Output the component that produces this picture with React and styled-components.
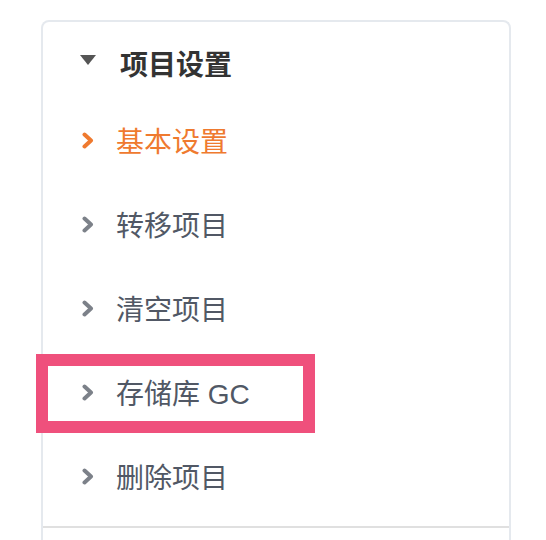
import React from "react";
import styled, { createGlobalStyle } from "styled-components";

const GlobalStyle = createGlobalStyle`
  html, body {
    margin: 0;
    padding: 0;
    background: #ffffff;
  }
  body {
    font-family: "Liberation Sans", "Noto Sans CJK SC", sans-serif;
  }
`;

const Page = styled.div`
  padding: 20px 35px 0 41px;
  height: 540px;
  box-sizing: border-box;
  overflow: hidden;
`;

const Card = styled.div`
  border: 2px solid #e5e9ee;
  border-bottom: none;
  border-radius: 8px 8px 0 0;
  height: 560px;
  box-sizing: border-box;
`;

const Group = styled.div`
  padding: 5px 0 8px 0;
`;

const GroupHeader = styled.div`
  display: flex;
  align-items: center;
  height: 71px;
  padding-left: 37px;
  gap: 24px;
  font-size: 28px;
  font-weight: 700;
  color: #333333;
`;

const Item = styled.div`
  position: relative;
  display: flex;
  align-items: center;
  height: 84px;
  padding-left: 39px;
  gap: 22px;
  font-size: 28px;
  color: ${(p) => (p.$active ? "#ef7a2f" : "#515865")};
`;

const Chevron = styled.svg`
  flex: none;
  width: 12px;
  height: 17px;
  color: ${(p) => (p.$active ? "#ef7a2f" : "#7c8189")};
`;

const Caret = styled.svg`
  flex: none;
  width: 16px;
  height: 10px;
  margin-top: -6px;
`;

const Highlight = styled.div`
  position: absolute;
  left: -7px;
  top: 4px;
  width: 279px;
  height: 79px;
  box-sizing: border-box;
  border: 12px solid #ef507c;
  pointer-events: none;
`;

const Divider = styled.div`
  height: 2px;
  background: #e0e0e0;
`;

const items = [
  { label: "基本设置", active: true },
  { label: "转移项目" },
  { label: "清空项目" },
  { label: "存储库 GC", marked: true },
  { label: "删除项目" },
];

function ChevronIcon({ active }) {
  return (
    <Chevron $active={active} viewBox="0 0 12 17">
      <polyline
        points="2.5,2.5 9,8.5 2.5,14.5"
        fill="none"
        stroke="currentColor"
        strokeWidth="4"
        strokeLinecap="round"
        strokeLinejoin="round"
      />
    </Chevron>
  );
}

export default function App() {
  return (
    <>
      <GlobalStyle />
      <Page>
        <Card>
          <Group>
            <GroupHeader>
              <Caret viewBox="0 0 16 10">
                <polygon points="0,0 16,0 8,10" fill="#555555" />
              </Caret>
              <span>项目设置</span>
            </GroupHeader>
            {items.map((it) => (
              <Item key={it.label} $active={it.active}>
                <ChevronIcon active={it.active} />
                <span>{it.label}</span>
                {it.marked && <Highlight />}
              </Item>
            ))}
          </Group>
          <Divider />
        </Card>
      </Page>
    </>
  );
}
